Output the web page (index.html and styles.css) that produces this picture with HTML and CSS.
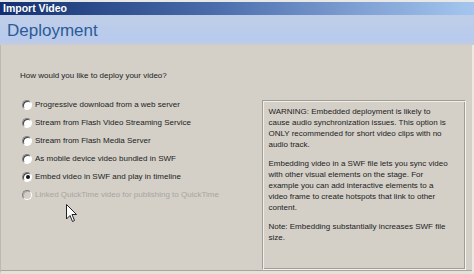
FILE: index.html
```html
<!DOCTYPE html>
<html lang="en">
<head>
    <meta charset="UTF-8">
    <title>Import Video</title>
    <link rel="stylesheet" href="styles.css">
</head>
<body>
    <div class="window">
        <div class="titlebar">Import Video</div>
        <div class="header">Deployment</div>
        <div class="content">
            <p class="question">How would you like to deploy your video?</p>
            <div class="columns">
                <div class="options">
                    <label class="option"><span class="radio"></span>Progressive download from a web server</label>
                    <label class="option"><span class="radio"></span>Stream from Flash Video Streaming Service</label>
                    <label class="option"><span class="radio"></span>Stream from Flash Media Server</label>
                    <label class="option"><span class="radio"></span>As mobile device video bundled in SWF</label>
                    <label class="option"><span class="radio checked"></span>Embed video in SWF and play in timeline</label>
                    <label class="option disabled"><span class="radio"></span>Linked QuickTime video for publishing to QuickTime</label>
                </div>
                <div class="info">
                    <p>WARNING: Embedded deployment is likely to cause audio synchronization issues. This option is ONLY recommended for short video clips with no audio track.</p>
                    <p>Embedding video in a SWF file lets you sync video with other visual elements on the stage. For example you can add interactive elements to a video frame to create hotspots that link to other content.</p>
                    <p>Note: Embedding substantially increases SWF file size.</p>
                </div>
            </div>
        </div>
        <svg class="cursor" width="12" height="19" viewBox="0 0 12 19">
            <path d="M0.5 0.5 L0.5 15 L4 11.5 L6.5 17.5 L8.5 16.5 L6 10.5 L10.5 10.5 Z" fill="#fff" stroke="#222" stroke-width="1"/>
        </svg>
    </div>
</body>
</html>
```

FILE: styles.css
```css
:root {
    --face: #d4d0c8;
    --text: #222;
    --disabled: #a8a59e;
}
body {
    margin: 0;
    background: #e8e8e6;
    font-family: 'Liberation Sans', Arial, sans-serif;
}
.window {
    position: relative;
    width: 474px;
    height: 274px;
    padding-top: 2px;
    box-sizing: border-box;
    display: flex;
    flex-direction: column;
    overflow: hidden;
}
.titlebar {
    height: 13px;
    line-height: 13px;
    padding-left: 3px;
    font-size: 10.5px;
    font-weight: bold;
    color: #fff;
    background: linear-gradient(90deg, #12306f, #4a6cab 45%, #7e9fd2 75%, #a4c6ee);
}
.header {
    height: 30px;
    line-height: 32px;
    padding-left: 7px;
    font-size: 17px;
    color: #2d5b96;
    background: linear-gradient(180deg, #bfcde6, #b8cbef 85%, #c9ccd6);
}
.content {
    flex: 1;
    background: var(--face);
    border-left: 1px solid #bdb9b1;
    border-right: 2px solid #ece9e2;
    border-bottom: 3px solid #e4e1da;
    box-shadow: inset 0 -1px 0 #a9a59c;
    padding: 0 6px 0 19px;
    font-size: 8px;
    color: var(--text);
}
.question {
    margin: 26px 0 0;
}
.columns {
    display: flex;
    margin-top: 20px;
}
.options {
    width: 243px;
    display: flex;
    flex-direction: column;
    gap: 7px;
    margin-top: -1px;
}
.option {
    display: flex;
    align-items: center;
    gap: 3px;
    height: 11px;
    white-space: nowrap;
}
.radio {
    width: 8px;
    height: 8px;
    border-radius: 50%;
    background: #fff;
    border: 1px solid;
    border-color: #808080 #fff #fff #808080;
    box-shadow: inset 1px 1px 0 #404040;
    position: relative;
    margin-left: 2px;
}
.radio.checked::after {
    content: "";
    position: absolute;
    left: 2.5px;
    top: 2.5px;
    width: 4px;
    height: 4px;
    border-radius: 50%;
    background: #111;
}
.option.disabled {
    color: var(--disabled);
}
.option.disabled .radio {
    background: var(--face);
    box-shadow: inset 1px 1px 0 #b0ada6;
}
.info {
    width: 204px;
    height: 170px;
    box-sizing: border-box;
    border: 1px solid;
    border-color: #a19d95 #f4f2ee #f4f2ee #a19d95;
    box-shadow: inset 1px 1px 0 #f0eee9, inset -1px -1px 0 #a19d95;
    padding: 5px 13px 0 5px;
    line-height: 11px;
}
.info p {
    margin: 0 0 8px;
}
.cursor {
    position: absolute;
    left: 66px;
    top: 204px;
}
```
